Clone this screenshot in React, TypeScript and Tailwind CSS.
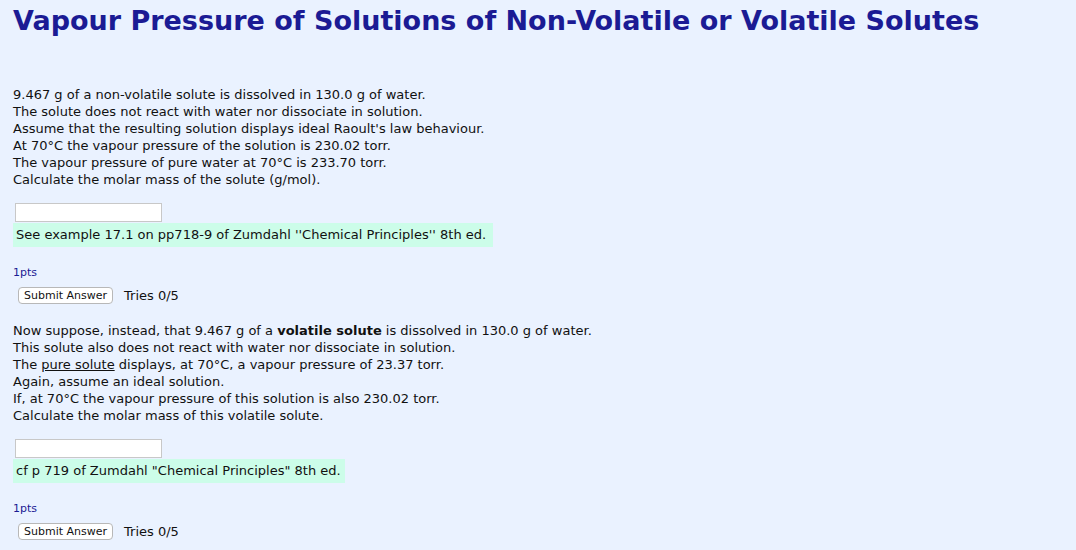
import React from "react";

const font = { fontFamily: '"DejaVu Sans", Verdana, sans-serif' };

function Question({
  lines,
  hint,
  hintWidth,
}: {
  lines: React.ReactNode[];
  hint: string;
  hintWidth: string;
}) {
  return (
    <div>
      <div className="text-[13px] leading-[17px] text-[#111]">
        {lines.map((l, i) => (
          <div key={i}>{l}</div>
        ))}
      </div>
      <div className="mt-[15px] ml-[2px]">
        <input
          type="text"
          className="block h-[19px] w-[147px] border border-[#c8c8c8] bg-white outline-none"
        />
      </div>
      <div className={`mt-[1px] ${hintWidth} bg-[#ccfde9] px-[3px] py-[3px] text-[13px] leading-[18px] text-[#111]`}>
        {hint}
      </div>
      <div className="mt-[19px] text-[11px] leading-[14px] text-[#1b1b94]">1pts</div>
      <div className="mt-[7px] ml-[5px] flex h-[17px] items-center gap-[11px]">
        <button className="h-[17px] rounded-[4px] border border-[#b8b8b8] bg-white px-[5px] text-[11px] leading-[15px] text-[#111]">
          Submit Answer
        </button>
        <span className="text-[13px] leading-[17px] text-[#111]">Tries 0/5</span>
      </div>
    </div>
  );
}

export default function App() {
  return (
    <div className="min-h-[550px] w-full bg-[#eaf2ff] px-[13px] pt-[4px]" style={font}>
      <h1 className="text-[27px] font-bold leading-[34px] text-[#1b1b94]">
        Vapour Pressure of Solutions of Non-Volatile or Volatile Solutes
      </h1>
      <div className="mt-[48px]">
        <Question
          hintWidth="w-[480px]"
          hint={'See example 17.1 on pp718-9 of Zumdahl \'\'Chemical Principles\'\' 8th ed.'}
          lines={[
            "9.467 g of a non-volatile solute is dissolved in 130.0 g of water.",
            "The solute does not react with water nor dissociate in solution.",
            "Assume that the resulting solution displays ideal Raoult's law behaviour.",
            "At 70°C the vapour pressure of the solution is 230.02 torr.",
            "The vapour pressure of pure water at 70°C is 233.70 torr.",
            "Calculate the molar mass of the solute (g/mol).",
          ]}
        />
      </div>
      <div className="mt-[18px]">
        <Question
          hintWidth="w-[332px]"
          hint={'cf p 719 of Zumdahl "Chemical Principles" 8th ed.'}
          lines={[
            <>
              Now suppose, instead, that 9.467 g of a <b>volatile solute</b> is dissolved in 130.0 g of water.
            </>,
            "This solute also does not react with water nor dissociate in solution.",
            <>
              The <span className="underline">pure solute</span> displays, at 70°C, a vapour pressure of 23.37 torr.
            </>,
            "Again, assume an ideal solution.",
            "If, at 70°C the vapour pressure of this solution is also 230.02 torr.",
            "Calculate the molar mass of this volatile solute.",
          ]}
        />
      </div>
    </div>
  );
}
